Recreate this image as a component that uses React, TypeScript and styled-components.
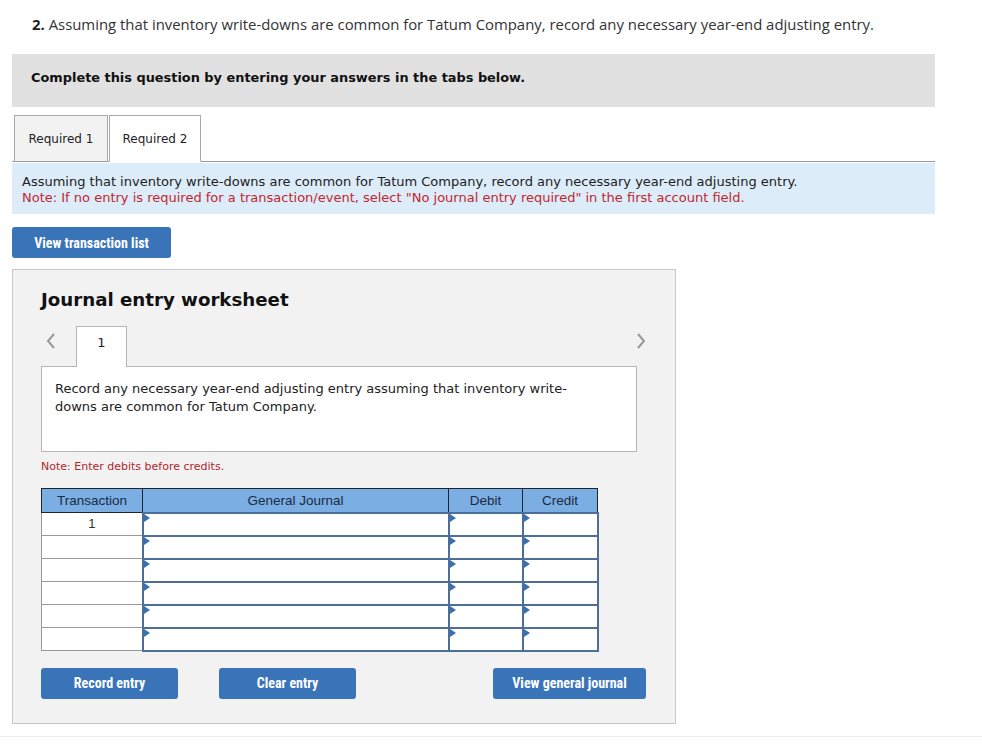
import React from "react";
import styled, { createGlobalStyle } from "styled-components";

const GlobalStyle = createGlobalStyle`
  body {
    margin: 0;
    background: #fff;
    font-family: "DejaVu Sans", Verdana, sans-serif;
    color: #222;
  }
`;

const rows = ["1", "", "", "", "", ""];

const App = () => {
  return (
    <>
      <GlobalStyle />
      <Page>
        <Question>
          <b>2.</b> Assuming that inventory write-downs are common for Tatum
          Company, record any necessary year-end adjusting entry.
        </Question>
        <Banner>Complete this question by entering your answers in the tabs below.</Banner>
        <TabRow>
          <Tab>Required 1</Tab>
          <Tab active>Required 2</Tab>
        </TabRow>
        <Info>
          <div>
            Assuming that inventory write-downs are common for Tatum Company,
            record any necessary year-end adjusting entry.
          </div>
          <Red>
            Note: If no entry is required for a transaction/event, select "No
            journal entry required" in the first account field.
          </Red>
        </Info>
        <ListBar>
          <Button width={159}>View transaction list</Button>
        </ListBar>
        <Worksheet>
          <WsTitle>Journal entry worksheet</WsTitle>
          <NavRow>
            <Chevron>
              <svg width="10" height="16" viewBox="0 0 10 16">
                <path d="M8 1 L2 8 L8 15" fill="none" stroke="#999" strokeWidth="2" />
              </svg>
            </Chevron>
            <EntryTab>1</EntryTab>
            <Spacer />
            <Chevron>
              <svg width="10" height="16" viewBox="0 0 10 16">
                <path d="M2 1 L8 8 L2 15" fill="none" stroke="#999" strokeWidth="2" />
              </svg>
            </Chevron>
          </NavRow>
          <Prompt>
            Record any necessary year-end adjusting entry assuming that inventory
            write-downs are common for Tatum Company.
          </Prompt>
          <SmallNote>Note: Enter debits before credits.</SmallNote>
          <Table>
            <colgroup>
              <col style={{ width: 101 }} />
              <col style={{ width: 306 }} />
              <col style={{ width: 74 }} />
              <col style={{ width: 75 }} />
            </colgroup>
            <thead>
              <HeadRow>
                <Th>Transaction</Th>
                <Th>General Journal</Th>
                <Th>Debit</Th>
                <Th>Credit</Th>
              </HeadRow>
            </thead>
            <tbody>
              {rows.map((r, i) => (
                <Row key={i}>
                  <TransCell>{r}</TransCell>
                  <InputCell />
                  <InputCell />
                  <InputCell />
                </Row>
              ))}
            </tbody>
          </Table>
          <ButtonRow>
            <Button width={137}>Record entry</Button>
            <Button width={137}>Clear entry</Button>
            <Button width={153} push>
              View general journal
            </Button>
          </ButtonRow>
        </Worksheet>
        <Footer />
      </Page>
    </>
  );
};

export default App;

const Page = styled.div`
  padding: 0 12px;
  width: 923px;
`;

const Question = styled.div`
  font-family: "Open Sans", "Liberation Sans", Arial, sans-serif;
  font-size: 14.9px;
  line-height: 20px;
  color: #333;
  padding: 14px 0 0 20px;
  b {
    font-weight: 700;
    color: #222;
  }
`;

const Banner = styled.div`
  margin-top: 20px;
  height: 53px;
  box-sizing: border-box;
  padding: 0 0 6px 19px;
  background: #e1e1e1;
  display: flex;
  align-items: center;
  font-weight: bold;
  font-size: 12.9px;
  color: #111;
`;

const TabRow = styled.div`
  margin-top: 8px;
  display: flex;
  padding-left: 2px;
  border-bottom: 1px solid #999;
`;

const Tab = styled.div<{ active?: boolean }>`
  width: ${(p) => (p.active ? 92 : 94)}px;
  height: 47px;
  box-sizing: border-box;
  margin-bottom: -1px;
  margin-right: 1px;
  border: 1px solid #aaa;
  border-bottom: 1px solid ${(p) => (p.active ? "#fff" : "#999")};
  background: ${(p) => (p.active ? "#fff" : "#f2f2f2")};
  display: flex;
  align-items: center;
  justify-content: center;
  font-size: 12px;
  color: #222;
`;

const Info = styled.div`
  margin-top: 1px;
  background: #dcecf9;
  height: 51px;
  box-sizing: border-box;
  padding: 11px 10px;
  font-size: 13px;
  line-height: 16px;
  color: #222;
`;

const Red = styled.div`
  color: #c1272d;
`;

const ListBar = styled.div`
  margin-top: 13px;
  display: flex;
`;

const Button = styled.div<{ width: number; push?: boolean }>`
  width: ${(p) => p.width}px;
  height: 31px;
  margin-left: ${(p) => (p.push ? "auto" : "0")};
  background: #3a74b8;
  border-radius: 3px;
  color: #fff;
  font-family: "Liberation Sans Narrow", "Roboto Condensed", "Liberation Sans", Arial, sans-serif;
  font-weight: bold;
  font-size: 14px;
  display: flex;
  align-items: center;
  justify-content: center;
`;

const Worksheet = styled.div`
  margin-top: 11px;
  width: 664px;
  height: 455px;
  box-sizing: border-box;
  background: #f2f2f2;
  border: 1px solid #c8c8c8;
  padding: 19px 0 0 28px;
`;

const WsTitle = styled.div`
  font-weight: bold;
  font-size: 18.2px;
  line-height: 22px;
  color: #111;
`;

const NavRow = styled.div`
  margin-top: 15px;
  width: 610px;
  display: flex;
  align-items: flex-start;
`;

const Chevron = styled.div`
  width: 20px;
  height: 16px;
  margin-top: 7px;
  display: flex;
  justify-content: center;
`;

const EntryTab = styled.div`
  margin-left: 15px;
  width: 51px;
  height: 41px;
  box-sizing: border-box;
  background: #fff;
  border: 1px solid #b5b5b5;
  border-bottom: none;
  margin-bottom: -1px;
  position: relative;
  z-index: 1;
  display: flex;
  justify-content: center;
  padding-top: 8px;
  font-size: 13px;
  color: #222;
`;

const Spacer = styled.div`
  flex: 1;
`;

const Prompt = styled.div`
  width: 596px;
  height: 86px;
  box-sizing: border-box;
  background: #fff;
  border: 1px solid #b5b5b5;
  padding: 13px 40px 13px 13px;
  font-size: 13px;
  line-height: 18px;
  color: #222;
`;

const SmallNote = styled.div`
  margin-top: 8px;
  font-size: 11px;
  line-height: 14px;
  color: #b0272d;
`;

const Table = styled.table`
  margin-top: 14px;
  width: 556px;
  border-collapse: collapse;
  table-layout: fixed;
  font-family: "Liberation Sans", Arial, sans-serif;
`;

const HeadRow = styled.tr`
  height: 24px;
`;

const Row = styled.tr`
  height: 23px;
`;

const Th = styled.th`
  padding: 0;
  background: #7baee3;
  border: 1px solid #223;
  font-weight: normal;
  font-size: 13.5px;
  color: #1b2a44;
  text-align: center;
`;

const TransCell = styled.td`
  padding: 0;
  background: #fff;
  border: 1px solid #999;
  text-align: center;
  vertical-align: top;
  line-height: 21px;
  font-size: 13px;
  color: #333;
`;

const InputCell = styled.td`
  padding: 0;
  background: #fff;
  border: 2px solid #4d6f97;
  position: relative;
  &::before {
    content: "";
    position: absolute;
    left: 0;
    top: 0;
    border-top: 4px solid transparent;
    border-bottom: 4px solid transparent;
    border-left: 6px solid #3c6fae;
  }
`;

const ButtonRow = styled.div`
  margin-top: 16px;
  width: 605px;
  display: flex;
  gap: 41px;
`;

const Footer = styled.div`
  margin-top: 12px;
  border-top: 1px solid #eee;
  width: 982px;
  margin-left: -12px;
`;
